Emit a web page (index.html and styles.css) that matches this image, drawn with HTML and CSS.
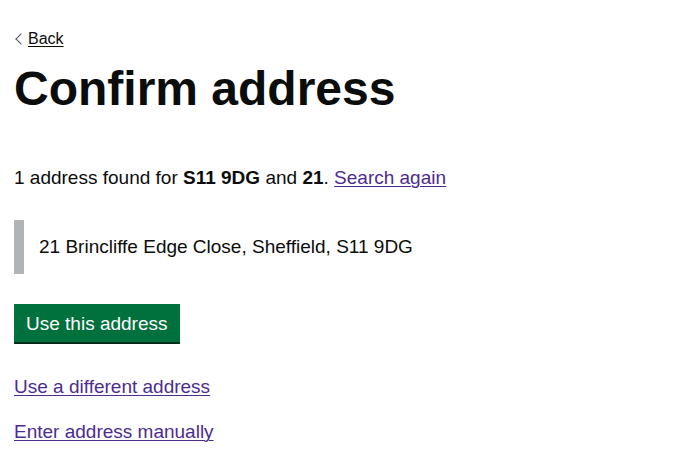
FILE: index.html
```html
<!DOCTYPE html>
<html lang="en">
<head>
<meta charset="utf-8">
<title>Confirm address</title>
<link rel="stylesheet" href="styles.css">
</head>
<body>
<div class="container">
  <a href="#" class="back-link">Back</a>
  <main class="main">
    <h1 class="heading">Confirm address</h1>
    <p class="body">1 address found for <strong>S11 9DG</strong> and <strong>21</strong>. <a href="#" class="link">Search again</a></p>
    <div class="inset">21 Brincliffe Edge Close, Sheffield, S11 9DG</div>
    <button class="button" type="button">Use this address</button>
    <p class="body"><a href="#" class="link">Use a different address</a></p>
    <p class="body"><a href="#" class="link">Enter address manually</a></p>
  </main>
</div>
</body>
</html>
```

FILE: styles.css
```css
* { box-sizing: border-box; }
html, body { margin: 0; padding: 0; background: #fff; }
body {
  font-family: "Liberation Sans", Arial, Helvetica, sans-serif;
  color: #0b0c0c;
  -webkit-font-smoothing: antialiased;
}
.container { margin: 0 14px; }
.back-link {
  display: inline-block;
  position: relative;
  margin-top: 29px;
  padding-left: 14px;
  font-size: 16px;
  line-height: 1.25;
  color: #0b0c0c;
  text-decoration: underline;
  text-underline-offset: 2px;
  text-decoration-thickness: 1px;
}
.back-link::before {
  content: "";
  position: absolute;
  top: 0; bottom: 0; left: 3px;
  width: 7px; height: 7px;
  margin: auto 0;
  border: solid #505a5f;
  border-width: 1px 1px 0 0;
  transform: rotate(225deg);
}
.main { padding-top: 15px; }
.heading {
  margin: 0 0 51px;
  font-size: 48px;
  line-height: 50px;
  font-weight: 700;
}
.body {
  margin: 0 0 20px;
  font-size: 19px;
  line-height: 25px;
}
.body strong { font-weight: 700; }
.link {
  color: #4c2c92;
  text-decoration: underline;
  text-underline-offset: 2px;
  text-decoration-thickness: 1px;
}
.inset {
  margin: 0 0 30px;
  padding: 15px;
  border-left: 10px solid #b1b4b6;
  font-size: 19px;
  line-height: 24px;
}
.body + .inset { margin-top: 30px; }
.button {
  display: block;
  margin: 0 0 32px;
  padding: 8px 10px 7px;
  border: 2px solid transparent;
  border-radius: 0;
  background: #00703c;
  box-shadow: 0 2px 0 #002d18;
  color: #fff;
  font-family: inherit;
  font-size: 19px;
  line-height: 19px;
  cursor: pointer;
}
```
